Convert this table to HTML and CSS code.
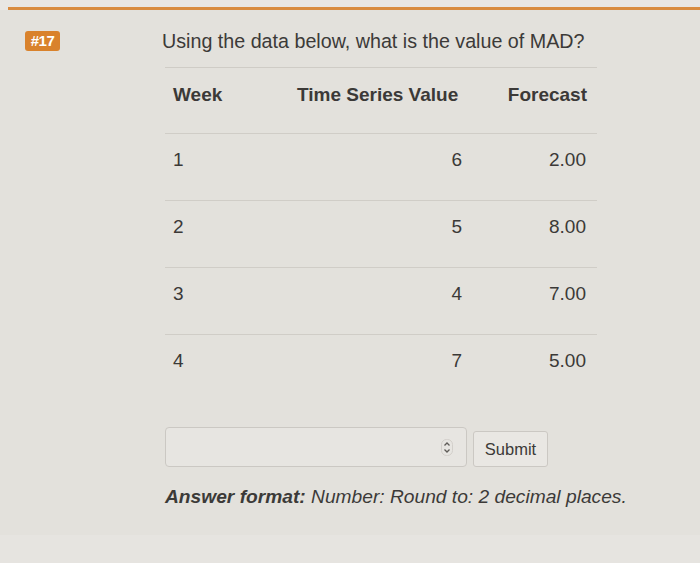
FILE: index.html
```html
<!DOCTYPE html>
<html>
<head>
<meta charset="utf-8">
<link rel="stylesheet" href="styles.css">
</head>
<body>
<div class="page">
  <div class="topline"></div>
  <div class="question">
    <div class="badge-col"><span class="badge">#17</span></div>
    <div class="main">
      <p class="prompt">Using the data below, what is the value of MAD?</p>
      <div class="table">
        <div class="row head">
          <div class="c1">Week</div>
          <div class="c2">Time Series Value</div>
          <div class="c3">Forecast</div>
        </div>
        <div class="row">
          <div class="c1">1</div>
          <div class="c2">6</div>
          <div class="c3">2.00</div>
        </div>
        <div class="row">
          <div class="c1">2</div>
          <div class="c2">5</div>
          <div class="c3">8.00</div>
        </div>
        <div class="row">
          <div class="c1">3</div>
          <div class="c2">4</div>
          <div class="c3">7.00</div>
        </div>
        <div class="row last">
          <div class="c1">4</div>
          <div class="c2">7</div>
          <div class="c3">5.00</div>
        </div>
      </div>
      <div class="answer">
        <div class="input">
          <svg class="spin" width="12" height="17" viewBox="0 0 12 17">
            <rect x="0.5" y="0.5" width="11" height="16" rx="5" fill="none" stroke="#d2cfca" stroke-width="1"/>
            <path d="M3.5 6.5 L6 4 L8.5 6.5" fill="none" stroke="#5f5c58" stroke-width="1.3"/>
            <path d="M3.5 10.5 L6 13 L8.5 10.5" fill="none" stroke="#5f5c58" stroke-width="1.3"/>
          </svg>
        </div>
        <button class="submit">Submit</button>
      </div>
      <p class="format"><b>Answer format:</b> Number: Round to: 2 decimal places.</p>
    </div>
  </div>
  <div class="bottom"></div>
</div>
</body>
</html>
```
FILE: styles.css
```css
html, body {
  margin: 0;
  padding: 0;
}
body {
  background: #e9e7e3;
  font-family: "Liberation Sans", Arial, sans-serif;
  color: #3b3937;
  width: 700px;
  height: 563px;
  overflow: hidden;
}
.page {
  display: flex;
  flex-direction: column;
  height: 563px;
}
.topline {
  margin: 7px 0 0 8px;
  height: 3px;
  background: #d98c40;
}
.question {
  display: flex;
  flex: 1;
  background: #e3e1dc;
}
.badge-col {
  width: 162px;
  padding: 21px 0 0 25px;
  box-sizing: border-box;
}
.badge {
  display: inline-block;
  width: 35px;
  height: 20px;
  line-height: 20px;
  text-align: center;
  background: #d9822c;
  color: #fff;
  font-weight: bold;
  font-size: 15px;
  letter-spacing: -0.5px;
  border-radius: 3px;
}
.main {
  width: 500px;
}
.prompt {
  margin: 18px 0 0 0;
  font-size: 19.7px;
  line-height: 26px;
  color: #3c3a38;
  white-space: nowrap;
}
.table {
  margin: 13px 0 0 3px;
  width: 432px;
  border-top: 1px solid #cfccc6;
}
.row {
  display: grid;
  grid-template-columns: 124px 174px 134px;
  height: 67px;
  border-bottom: 1px solid #d0cdc7;
  font-size: 19px;
  line-height: 22px;
  padding-top: 15px;
  box-sizing: border-box;
}
.row.last {
  border-bottom: none;
}
.row.head {
  height: 66px;
  font-weight: bold;
  padding-top: 16px;
}
.row.mid {
  height: 66px;
}
.c1 {
  padding-left: 8px;
}
.c2 {
  text-align: right;
  padding-right: 1px;
}
.c3 {
  text-align: right;
  padding-right: 11px;
}
.head .c2 {
  text-align: left;
  padding-left: 8px;
  white-space: nowrap;
}
.head .c3 {
  padding-right: 10px;
}
.answer {
  display: flex;
  align-items: center;
  margin: 25px 0 0 3px;
  gap: 6px;
}
.input {
  width: 302px;
  height: 40px;
  box-sizing: border-box;
  border: 1px solid #cbc8c3;
  border-radius: 4px;
  background: #e7e5e1;
  display: flex;
  align-items: center;
  justify-content: flex-end;
  padding-right: 13px;
}
.submit {
  width: 75px;
  height: 36px;
  margin-top: 4px;
  border: 1px solid #cbc8c3;
  border-radius: 3px;
  background: #e9e7e3;
  font-family: "Liberation Sans", Arial, sans-serif;
  font-size: 16.5px;
  color: #3c3a38;
  padding: 0;
}
.format {
  margin: 19px 0 0 3px;
  font-size: 19.2px;
  font-style: italic;
  color: #3c3a38;
  white-space: nowrap;
}
.format b {
  font-weight: bold;
}
.bottom {
  height: 28px;
  background: #e6e4e0;
}
```
